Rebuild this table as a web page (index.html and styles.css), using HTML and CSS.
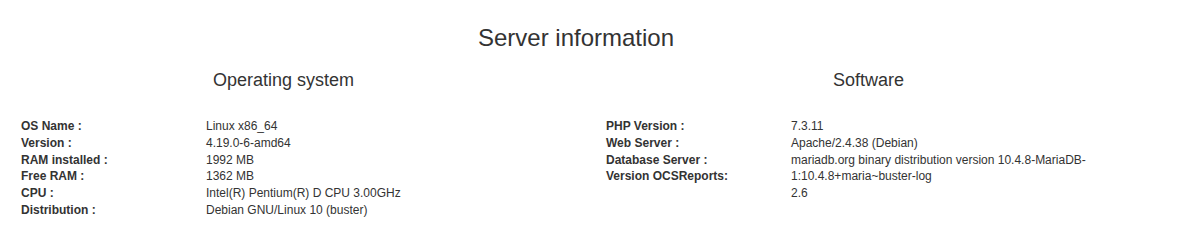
FILE: index.html
```html
<!DOCTYPE html>
<html>
<head>
<meta charset="utf-8">
<link rel="stylesheet" href="styles.css">
</head>
<body>
<div class="page">
  <h3 class="title">Server information</h3>
  <div class="cols">
    <section class="col">
      <h4 class="subtitle">Operating system</h4>
      <div class="info">
        <div class="labels">
          <div>OS Name :</div>
          <div>Version :</div>
          <div>RAM installed :</div>
          <div>Free RAM :</div>
          <div>CPU :</div>
          <div>Distribution :</div>
        </div>
        <div class="values">
          <div>Linux x86_64</div>
          <div>4.19.0-6-amd64</div>
          <div>1992 MB</div>
          <div>1362 MB</div>
          <div>Intel(R) Pentium(R) D CPU 3.00GHz</div>
          <div>Debian GNU/Linux 10 (buster)</div>
        </div>
      </div>
    </section>
    <section class="col">
      <h4 class="subtitle">Software</h4>
      <div class="info">
        <div class="labels">
          <div>PHP Version :</div>
          <div>Web Server :</div>
          <div>Database Server :</div>
          <div>Version OCSReports:</div>
        </div>
        <div class="values">
          <div>7.3.11</div>
          <div>Apache/2.4.38 (Debian)</div>
          <div>mariadb.org binary distribution version 10.4.8-MariaDB-1:10.4.8+maria~buster-log</div>
          <div>2.6</div>
        </div>
      </div>
    </section>
  </div>
</div>
</body>
</html>
```

FILE: styles.css
```css
html, body {
  margin: 0;
  padding: 0;
  background: #fff;
}
body {
  font-family: "Liberation Sans", Arial, sans-serif;
  font-size: 12px;
  line-height: 1.4;
  color: #333;
}
.page {
  width: 1152px;
  padding-top: 22px;
}
.title {
  margin: 0;
  font-size: 24px;
  font-weight: 400;
  line-height: 32px;
  text-align: center;
}
.cols {
  display: grid;
  grid-template-columns: 567px 567px;
  column-gap: 18px;
  margin-top: 14px;
}
.subtitle {
  margin: 0;
  font-size: 18px;
  font-weight: 400;
  line-height: 24px;
  text-align: center;
}
.info {
  display: flex;
  padding-left: 21px;
  margin-top: 26px;
}
.labels {
  width: 185px;
  font-weight: 700;
}
.values {
  width: 300px;
}
```
